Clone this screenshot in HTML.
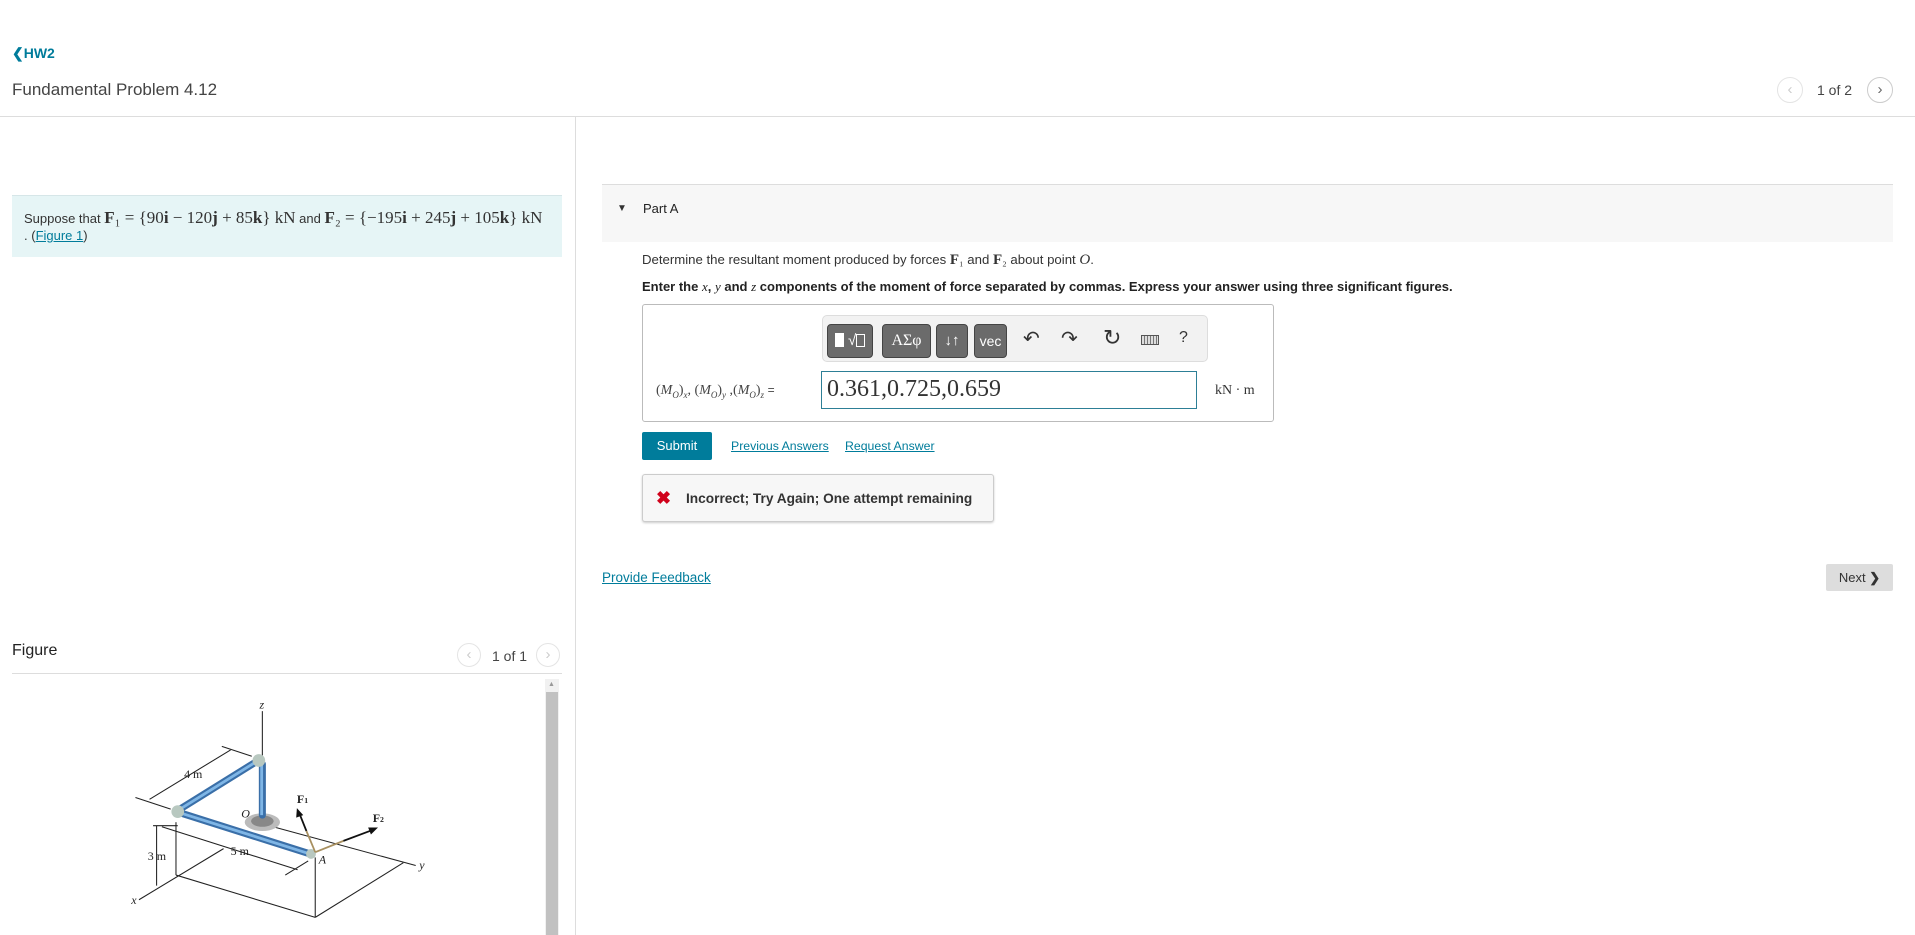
<!DOCTYPE html>
<html><head><meta charset="utf-8"><style>
*{box-sizing:border-box;margin:0;padding:0}
body{width:1915px;height:935px;position:relative;background:#fff;font-family:"Liberation Sans",Arial,sans-serif;color:#333;overflow:hidden}
.a{position:absolute}
.link{color:#007c9b;text-decoration:underline}
.m{font-family:"Liberation Serif",serif}
.circ{position:absolute;width:26px;height:26px;border-radius:50%;border:1px solid #ccc;text-align:center;line-height:23px;font-size:15px;color:#999}
.tb{position:absolute;top:8px;height:34px;background:#6b6b6b;border:1px solid #444;border-radius:4px;color:#fff;text-align:center;line-height:32px;font-size:15px}
</style></head><body>
<div class="a" style="left:12px;top:45px;font-size:14px;font-weight:bold;color:#007c9b">&#10094;HW2</div>
<div class="a" style="left:12px;top:80px;font-size:17px;color:#444">Fundamental Problem 4.12</div>
<div class="circ" style="left:1777px;top:77px;border-color:#e4e4e4;color:#ccc">&lsaquo;</div>
<div class="a" style="left:1817px;top:82px;font-size:14px;color:#444">1 of 2</div>
<div class="circ" style="left:1867px;top:77px;color:#666">&rsaquo;</div>
<div class="a" style="left:0;top:116px;width:1915px;height:1px;background:#ddd"></div>
<div class="a" style="left:575px;top:117px;width:1px;height:818px;background:#ddd"></div>

<div class="a" style="left:12px;top:195px;width:550px;height:62px;background:#e6f5f6;border-top:1px solid #d6e6e8;padding:13px 12px;font-size:13px;line-height:17px">
Suppose that <b class="m" style="font-size:17px">F</b><span class="m" style="font-size:17px">₁ = {90<b>i</b> − 120<b>j</b> + 85<b>k</b>} kN</span> and <b class="m" style="font-size:17px">F</b><span class="m" style="font-size:17px">₂ = {−195<b>i</b> + 245<b>j</b> + 105<b>k</b>} kN</span><br>. (<span class="link">Figure 1</span>)</div>

<div class="a" style="left:12px;top:642px;font-size:16px;color:#222">Figure</div>
<div class="circ" style="left:457px;top:643px;width:24px;height:24px;line-height:21px;border-color:#e4e4e4;color:#ccc">&lsaquo;</div>
<div class="a" style="left:492px;top:648px;font-size:14px;color:#444">1 of 1</div>
<div class="circ" style="left:536px;top:643px;width:24px;height:24px;line-height:21px;border-color:#e4e4e4;color:#ccc">&rsaquo;</div>
<div class="a" style="left:12px;top:673px;width:550px;height:1px;background:#ddd"></div>
<div class="a" style="left:545px;top:679px;width:14px;height:256px;background:#f1f1f1"></div>
<div class="a" style="left:546px;top:692px;width:12px;height:243px;background:#c1c1c1"></div>
<div class="a" style="left:548px;top:681px;font-size:7px;color:#999">▲</div>

<svg class="a" style="left:5px;top:623px" width="570" height="312" viewBox="0 0 1616 885" preserveAspectRatio="xMinYMin meet">
<g stroke="#222" stroke-width="3" fill="none">
<line x1="730" y1="250" x2="730" y2="385"/>
<line x1="615" y1="350" x2="700" y2="378"/>
<line x1="410" y1="500" x2="640" y2="360"/>
<line x1="370" y1="495" x2="470" y2="528"/>
<line x1="430" y1="575" x2="430" y2="745"/>
<line x1="420" y1="575" x2="490" y2="575"/>
<line x1="485" y1="565" x2="485" y2="715"/>
<line x1="880" y1="665" x2="880" y2="835"/>
<line x1="485" y1="715" x2="880" y2="835"/>
<line x1="880" y1="835" x2="1130" y2="680"/>
<line x1="380" y1="785" x2="620" y2="640"/>
<line x1="750" y1="575" x2="1165" y2="688"/>
<line x1="445" y1="578" x2="830" y2="700"/>
<line x1="795" y1="715" x2="860" y2="675"/>
</g>
<ellipse cx="730" cy="565" rx="50" ry="25" fill="#bbb"/>
<ellipse cx="730" cy="562" rx="32" ry="16" fill="#888"/>
<g stroke="#3a6fa8" stroke-width="20" stroke-linecap="round"><line x1="715" y1="392" x2="490" y2="532"/><line x1="730" y1="400" x2="730" y2="545"/><line x1="495" y1="538" x2="865" y2="655"/></g>
<g stroke="#7fb6e6" stroke-width="8"><line x1="715" y1="392" x2="490" y2="532"/><line x1="728" y1="400" x2="728" y2="545"/><line x1="495" y1="538" x2="865" y2="655"/></g>
<circle cx="720" cy="390" r="18" fill="#b8c8c0"/><circle cx="490" cy="535" r="18" fill="#b8c8c0"/><circle cx="868" cy="655" r="14" fill="#b8c8c0"/>
<g stroke="#a89060" stroke-width="5"><line x1="880" y1="650" x2="855" y2="590"/><line x1="880" y1="650" x2="960" y2="618"/></g>
<g stroke="#111" stroke-width="5"><line x1="855" y1="590" x2="835" y2="540"/><line x1="960" y1="618" x2="1040" y2="588"/></g>
<polygon points="828,525 826,552 846,545" fill="#111"/><polygon points="1058,580 1030,580 1038,600" fill="#111"/>
<g font-family="Liberation Serif,serif" font-size="34" fill="#222">
<text x="722" y="243" font-style="italic">z</text><text x="508" y="440">4 m</text><text x="670" y="552" font-style="italic">O</text>
<text x="828" y="510" font-weight="bold">F<tspan font-size="22">1</tspan></text><text x="1043" y="565" font-weight="bold">F<tspan font-size="22">2</tspan></text>
<text x="405" y="672">3 m</text><text x="640" y="658">5 m</text><text x="890" y="682" font-style="italic">A</text><text x="1175" y="698" font-style="italic">y</text><text x="358" y="797" font-style="italic">x</text>
</g></svg>

<div class="a" style="left:602px;top:184px;width:1291px;height:58px;background:#f7f7f7;border-top:1px solid #ddd"></div>
<div class="a" style="left:617px;top:203px;font-size:10px;color:#333">▼</div>
<div class="a" style="left:643px;top:201px;font-size:13px;color:#222">Part A</div>
<div class="a" style="left:642px;top:252px;font-size:13.2px;color:#333">Determine the resultant moment produced by forces <b class="m" style="font-size:15px">F</b><span class="m">₁</span> and <b class="m" style="font-size:15px">F</b><span class="m">₂</span> about point <i class="m" style="font-size:15px">O</i>.</div>
<div class="a" style="left:642px;top:279px;font-size:13px;font-weight:bold;color:#222">Enter the <i class="m" style="font-weight:normal">x</i>, <i class="m" style="font-weight:normal">y</i> and <i class="m" style="font-weight:normal">z</i> components of the moment of force separated by commas. Express your answer using three significant figures.</div>

<div class="a" style="left:642px;top:304px;width:632px;height:118px;border:1px solid #bbb;border-radius:3px"></div>
<div class="a" style="left:822px;top:315px;width:386px;height:47px;background:#f2f2f2;border:1px solid #ddd;border-radius:5px">
<div class="tb" style="left:4px;width:46px"><span style="display:inline-block;width:9px;height:14px;background:#fff;vertical-align:-2px"></span> √<span style="display:inline-block;width:9px;height:13px;border:1px solid #fff;vertical-align:-2px"></span></div>
<div class="tb" style="left:59px;width:49px;font-family:'Liberation Serif',serif;font-size:16px">ΑΣφ</div>
<div class="tb" style="left:113px;width:32px">↓↑</div>
<div class="tb" style="left:151px;width:33px;font-size:14px">vec</div>
<div class="a" style="left:200px;top:10px;font-size:20px;color:#333">↶</div>
<div class="a" style="left:238px;top:10px;font-size:20px;color:#333">↷</div>
<div class="a" style="left:280px;top:9px;font-size:22px;color:#333">↻</div>
<div class="a" style="left:318px;top:19px;width:18px;height:10px;border:1px solid #555;background:repeating-linear-gradient(90deg,#ddd 0 2px,#777 2px 3px)"></div>
<div class="a" style="left:356px;top:13px;font-size:16px;color:#333">?</div>
</div>
<div class="a m" style="left:656px;top:383px;font-size:14px;color:#444">(<i>M<sub style="font-size:9px">O</sub></i>)<sub style="font-size:9px"><i>x</i></sub>, (<i>M<sub style="font-size:9px">O</sub></i>)<sub style="font-size:9px"><i>y</i></sub> ,(<i>M<sub style="font-size:9px">O</sub></i>)<sub style="font-size:9px"><i>z</i></sub> <span style="font-family:'Liberation Sans';font-size:12px">=</span></div>
<div class="a m" style="left:821px;top:371px;width:376px;height:38px;border:1px solid #2d7f96;padding:4px 5px;font-size:24px;color:#333">0.361,0.725,0.659</div>
<div class="a m" style="left:1215px;top:383px;font-size:14px;color:#333">kN · m</div>

<div class="a" style="left:642px;top:432px;width:70px;height:28px;background:#007c9b;border-radius:2px;color:#fff;font-size:13px;text-align:center;line-height:28px">Submit</div>
<div class="a link" style="left:731px;top:439px;font-size:12.3px">Previous Answers</div>
<div class="a link" style="left:845px;top:439px;font-size:12.3px">Request Answer</div>
<div class="a" style="left:642px;top:474px;width:352px;height:48px;background:#f7f7f7;border:1px solid #ccc;border-radius:3px;box-shadow:0 1px 2px #ccc"></div>
<div class="a" style="left:656px;top:488px;font-size:18px;font-weight:bold;color:#d0021b">✖</div>
<div class="a" style="left:686px;top:491px;font-size:13.7px;font-weight:bold;color:#333">Incorrect; Try Again; One attempt remaining</div>

<div class="a link" style="left:602px;top:570px;font-size:13.5px">Provide Feedback</div>
<div class="a" style="left:1826px;top:564px;width:67px;height:27px;background:#ddd;border-radius:2px;font-size:13px;text-align:center;line-height:27px;color:#333">Next <b>&#10095;</b></div>
</body></html>
